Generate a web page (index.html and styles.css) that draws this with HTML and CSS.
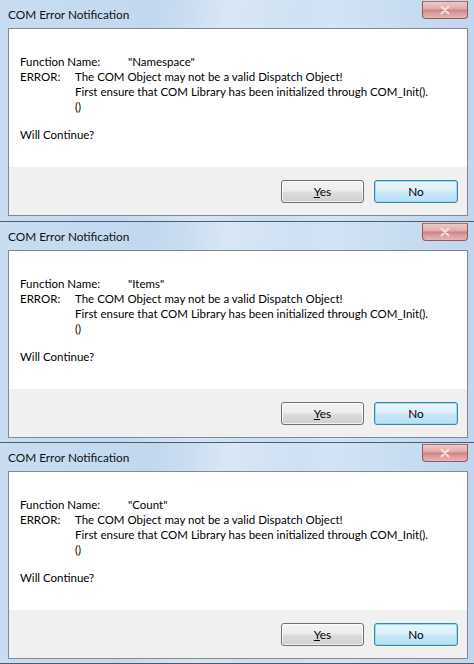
FILE: index.html
```html
<!DOCTYPE html>
<html>
<head>
<meta charset="utf-8">
<link rel="stylesheet" href="styles.css">
</head>
<body>
<div class="stack">
  <div class="dialog first">
    <div class="titlebar">
      <span class="title">COM Error Notification</span>
      <span class="close"><svg width="44" height="16" viewBox="0 0 44 16"><path d="M18.5 4.5 L25.5 11.5 M25.5 4.5 L18.5 11.5" stroke="#f7dede" stroke-width="2" stroke-linecap="round"/></svg></span>
    </div>
    <div class="client">
      <div class="body">
        <div class="row"><span class="lbl-fn">Function Name:</span><span>"Namespace"</span></div>
        <div class="row"><span class="lbl-err">ERROR:</span>
          <div class="msg">
            <div>The COM Object may not be a valid Dispatch Object!</div>
            <div>First ensure that COM Library has been initialized through COM_Init().</div>
            <div>()</div>
          </div>
        </div>
        <div class="ask">Will Continue?</div>
      </div>
      <div class="footer">
        <button class="btn"><u>Y</u>es</button>
        <button class="btn default">No</button>
      </div>
    </div>
  </div>
  <div class="dialog">
    <div class="titlebar">
      <span class="title">COM Error Notification</span>
      <span class="close"><svg width="44" height="16" viewBox="0 0 44 16"><path d="M18.5 4.5 L25.5 11.5 M25.5 4.5 L18.5 11.5" stroke="#f7dede" stroke-width="2" stroke-linecap="round"/></svg></span>
    </div>
    <div class="client">
      <div class="body">
        <div class="row"><span class="lbl-fn">Function Name:</span><span>"Items"</span></div>
        <div class="row"><span class="lbl-err">ERROR:</span>
          <div class="msg">
            <div>The COM Object may not be a valid Dispatch Object!</div>
            <div>First ensure that COM Library has been initialized through COM_Init().</div>
            <div>()</div>
          </div>
        </div>
        <div class="ask">Will Continue?</div>
      </div>
      <div class="footer">
        <button class="btn"><u>Y</u>es</button>
        <button class="btn default">No</button>
      </div>
    </div>
  </div>
  <div class="dialog">
    <div class="titlebar">
      <span class="title">COM Error Notification</span>
      <span class="close"><svg width="44" height="16" viewBox="0 0 44 16"><path d="M18.5 4.5 L25.5 11.5 M25.5 4.5 L18.5 11.5" stroke="#f7dede" stroke-width="2" stroke-linecap="round"/></svg></span>
    </div>
    <div class="client">
      <div class="body">
        <div class="row"><span class="lbl-fn">Function Name:</span><span>"Count"</span></div>
        <div class="row"><span class="lbl-err">ERROR:</span>
          <div class="msg">
            <div>The COM Object may not be a valid Dispatch Object!</div>
            <div>First ensure that COM Library has been initialized through COM_Init().</div>
            <div>()</div>
          </div>
        </div>
        <div class="ask">Will Continue?</div>
      </div>
      <div class="footer">
        <button class="btn"><u>Y</u>es</button>
        <button class="btn default">No</button>
      </div>
    </div>
  </div>
</div>
</body>
</html>
```
FILE: styles.css
```css
html, body {
  margin: 0;
  padding: 0;
}
body {
  width: 474px;
  height: 664px;
  overflow: hidden;
  font-family: Lato, "Open Sans", sans-serif;
  font-size: 11.5px;
  color: #000;
  background: #c3d7ec;
}
.stack {
  display: flex;
  flex-direction: column;
}
.dialog {
  box-sizing: border-box;
  height: 221px;
  padding: 0 6px 4px 8px;
  border-bottom: 1px solid #4e5c6b;
  display: flex;
  flex-direction: column;
  background:
    linear-gradient(100deg, rgba(255,255,255,0) 30%, rgba(255,255,255,0.35) 45%, rgba(255,255,255,0) 60%),
    linear-gradient(to right, #c8ddf1, #c0d7ef 40%, #d2e4f5 70%, #bfd6ee);
}
.dialog.first {
  height: 222px;
  padding-bottom: 5px;
}
.titlebar {
  height: 28px;
  flex: none;
  display: flex;
  justify-content: space-between;
  align-items: flex-start;
}
.title {
  line-height: 29px;
  font-size: 11.8px;
  color: #111;
}
.close {
  margin-top: 1px;
  width: 44px;
  height: 16px;
  border: 1px solid #8f5a5a;
  border-top-color: #a87070;
  border-radius: 0 0 4px 4px;
  background: linear-gradient(to bottom, #ecc9c9 0%, #e1adad 40%, #cf8484 52%, #d99c9c 70%, #e5b7b7 100%);
  display: flex;
}
.client {
  flex: 1;
  border: 1px solid #7d8a97;
  background: #fff;
  display: flex;
  flex-direction: column;
}
.body {
  flex: 1;
  padding: 25px 0 0 11px;
  line-height: 15px;
}
.row {
  display: flex;
}
.lbl-fn {
  width: 108px;
  flex: none;
}
.lbl-err {
  width: 55px;
  flex: none;
}
.ask {
  margin-top: 13px;
}
.footer {
  height: 48px;
  flex: none;
  background: #f0f0f0;
  display: flex;
  justify-content: flex-end;
  align-items: flex-start;
  gap: 10px;
  padding: 13px 9px 0 0;
  box-sizing: border-box;
}
.btn {
  width: 83px;
  height: 23px;
  box-sizing: border-box;
  font-family: Lato, "Open Sans", sans-serif;
  font-size: 11.8px;
  color: #000;
  border: 1px solid #707070;
  border-radius: 3px;
  background: linear-gradient(to bottom, #f3f3f3 0%, #ececec 48%, #dddddd 52%, #cfcfcf 100%);
  box-shadow: inset 0 0 0 1px rgba(255,255,255,0.7);
  padding: 0;
}
.btn.default {
  width: 84px;
  border-color: #3c85a8;
  background: linear-gradient(to bottom, #e8f5fc 0%, #dcf0fb 48%, #c9e8f8 52%, #b9e0f5 100%);
  box-shadow: inset 0 0 0 1px #8fdcf3;
}
```
